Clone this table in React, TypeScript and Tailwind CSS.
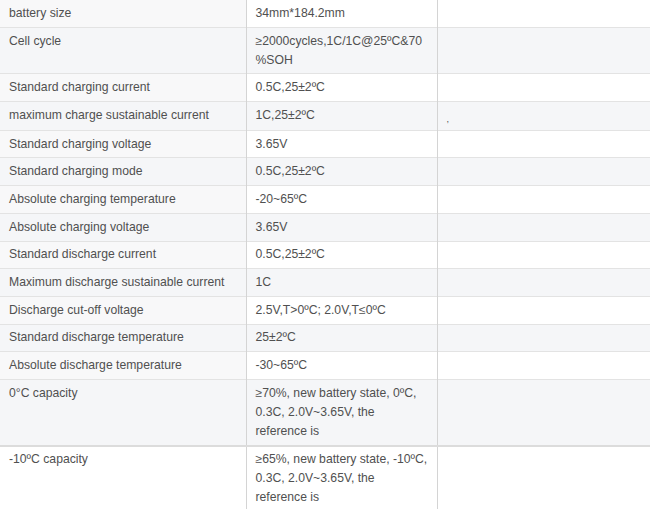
const ROWS: { label: string; value: string[]; extra?: string; thick?: boolean }[] = [
  { label: "battery size", value: ["34mm*184.2mm"] },
  { label: "Cell cycle", value: ["≥2000cycles,1C/1C@25ºC&70", "%SOH"] },
  { label: "Standard charging current", value: ["0.5C,25±2ºC"] },
  { label: "maximum charge sustainable current", value: ["1C,25±2ºC"], extra: "," },
  { label: "Standard charging voltage", value: ["3.65V"] },
  { label: "Standard charging mode", value: ["0.5C,25±2ºC"] },
  { label: "Absolute charging temperature", value: ["-20~65ºC"] },
  { label: "Absolute charging voltage", value: ["3.65V"] },
  { label: "Standard discharge current", value: ["0.5C,25±2ºC"] },
  { label: "Maximum discharge sustainable current", value: ["1C"] },
  { label: "Discharge cut-off voltage", value: ["2.5V,T>0ºC; 2.0V,T≤0ºC"] },
  { label: "Standard discharge temperature", value: ["25±2ºC"] },
  { label: "Absolute discharge temperature", value: ["-30~65ºC"] },
  {
    label: "0°C capacity",
    value: ["≥70%, new battery state, 0ºC,", "0.3C, 2.0V~3.65V, the", "reference is"],
    thick: true,
  },
  {
    label: "-10ºC capacity",
    value: ["≥65%, new battery state, -10ºC,", "0.3C, 2.0V~3.65V, the", "reference is"],
  },
];

export default function App() {
  return (
    <div className="w-[650px] h-[509px] overflow-hidden bg-white">
      <table
        className="w-[680px] table-fixed border-collapse text-[12.2px] leading-[19px] text-[#505050]"
        style={{ fontFamily: '"Liberation Sans", Arial, sans-serif' }}
      >
        <colgroup>
          <col className="w-[246px]" />
          <col className="w-[191px]" />
          <col />
        </colgroup>
        <tbody>
          {ROWS.map((r, i) => {
            const striped = i % 2 === 1;
            const last = i === ROWS.length - 1;
            const rowBg = striped ? "bg-[#f5f6f8]" : "bg-white";
            const labelBg = striped ? "bg-[#f5f6f8]" : last ? "bg-white" : "bg-[#f8f8f9]";
            const border = r.thick ? "border-b-2 border-b-[#dcdcdc]" : "border-b border-b-[#e3e3e3]";
            return (
              <tr key={i} className={`${rowBg} ${border}`}>
                <td className={`${labelBg} border-r border-r-[#d4d4d4] px-[9px] py-[3.85px] align-top`}>{r.label}</td>
                <td className="border-r border-r-[#d4d4d4] px-[9px] py-[3.85px] align-top">
                  {r.value.map((line, j) => (
                    <div key={j} className="whitespace-nowrap">
                      {line}
                    </div>
                  ))}
                </td>
                <td className="px-[9px] py-[3.85px] align-top">
                  {r.extra && <span className="relative top-[3px] text-[9px]">{r.extra}</span>}
                </td>
              </tr>
            );
          })}
        </tbody>
      </table>
    </div>
  );
}
